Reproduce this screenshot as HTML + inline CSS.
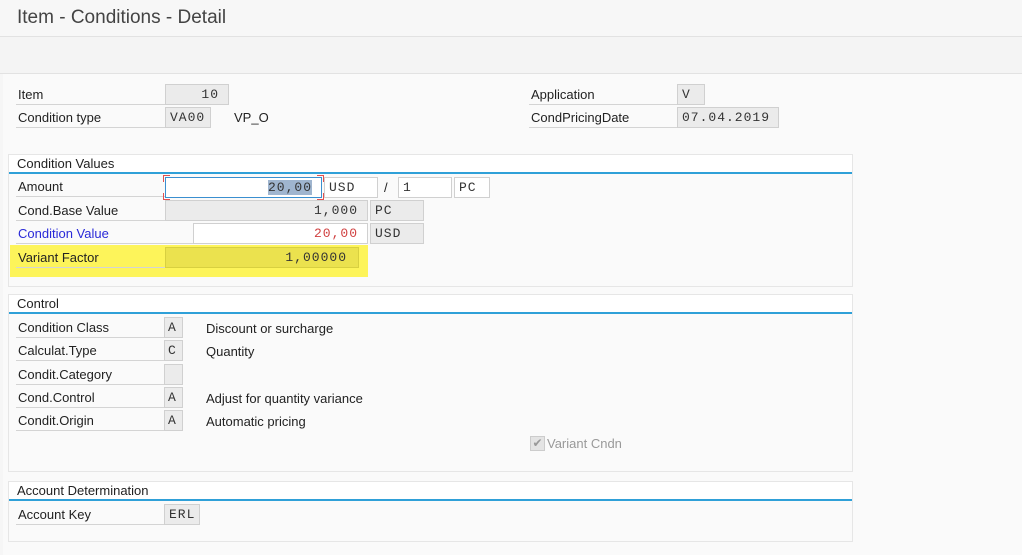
<!DOCTYPE html><html><head><style>
body{margin:0;width:1022px;height:555px;background:#f6f6f6;font-family:"Liberation Sans",sans-serif;font-size:13px;color:#222;position:relative;overflow:hidden}
.a{position:absolute}
.lbl{position:absolute;height:20px;line-height:20px;border-bottom:1px solid #d4d4d4;padding-left:2px;box-sizing:border-box}
.f{position:absolute;height:21px;line-height:20px;box-sizing:border-box;border:1px solid #d0d0d0;background:#ebebeb;font-family:"Liberation Mono",monospace;font-size:13px;letter-spacing:1px;color:#333;padding:0 4px}
.w{background:#fff}
.r{text-align:right;padding-right:9px}
.box{position:absolute;left:8px;right:169px;background:#fafafa;border:1px solid #e6e6e6}
.hd{position:absolute;left:0;right:0;top:0;height:17px;border-bottom:2px solid #2fa0d8;background:#fff;padding-left:8px;line-height:17px}
</style></head><body>
<div class="a" style="left:0;top:0;width:1022px;height:36px;background:#f7f7f7;border-bottom:1px solid #e2e2e2"></div>
<div class="a" style="left:17px;top:7px;font-size:19px;color:#444">Item - Conditions - Detail</div>
<div class="a" style="left:0;top:37px;width:1022px;height:36px;background:#f4f4f4;border-bottom:1px solid #e2e2e2"></div>
<div class="a" style="left:3px;top:74px;width:1019px;height:481px;background:#fafafa"></div>

<div class="lbl" style="left:16px;top:85px;width:150px">Item</div>
<div class="f r" style="left:165px;top:84px;width:64px">10</div>
<div class="lbl" style="left:16px;top:108px;width:150px">Condition type</div>
<div class="f" style="left:165px;top:107px;width:46px">VA00</div>
<div class="a" style="left:234px;top:110px">VP_O</div>
<div class="lbl" style="left:529px;top:85px;width:150px">Application</div>
<div class="f" style="left:677px;top:84px;width:28px">V</div>
<div class="lbl" style="left:529px;top:108px;width:150px">CondPricingDate</div>
<div class="f" style="left:677px;top:107px;width:102px">07.04.2019</div>

<div class="box" style="top:154px;height:131px"><div class="hd">Condition Values</div></div>
<div class="lbl" style="left:16px;top:177px;width:150px">Amount</div>
<div class="f w r" style="left:165px;top:177px;width:157px;border:1px solid #3a8fd0"><span style="background:#9fb5cf">20,00</span></div>
<div class="a" style="left:163px;top:175px;width:6px;height:6px;border-left:1px solid #e05050;border-top:1px solid #e05050"></div>
<div class="a" style="left:163px;top:193px;width:6px;height:6px;border-left:1px solid #e05050;border-bottom:1px solid #e05050"></div>
<div class="a" style="left:317px;top:175px;width:6px;height:6px;border-right:1px solid #e05050;border-top:1px solid #e05050"></div>
<div class="a" style="left:317px;top:193px;width:6px;height:6px;border-right:1px solid #e05050;border-bottom:1px solid #e05050"></div>
<div class="f w" style="left:324px;top:177px;width:54px">USD</div>
<div class="a" style="left:384px;top:180px">/</div>
<div class="f w" style="left:398px;top:177px;width:54px">1</div>
<div class="f w" style="left:454px;top:177px;width:36px">PC</div>
<div class="lbl" style="left:16px;top:201px;width:150px">Cond.Base Value</div>
<div class="f r" style="left:165px;top:200px;width:203px">1,000</div>
<div class="f" style="left:370px;top:200px;width:54px">PC</div>
<div class="lbl" style="left:16px;top:224px;width:180px;color:#2a2ad8">Condition Value</div>
<div class="f w r" style="left:193px;top:223px;width:175px;color:#d04040">20,00</div>
<div class="f" style="left:370px;top:223px;width:54px">USD</div>
<div class="a" style="left:10px;top:245px;width:358px;height:32px;background:#fdf45a"></div>
<div class="lbl" style="left:16px;top:248px;width:150px">Variant Factor</div>
<div class="f r" style="left:165px;top:247px;width:194px;background:#ebe24e;border-color:#d8d040;padding-right:11px">1,00000</div>

<div class="box" style="top:294px;height:176px"><div class="hd">Control</div></div>
<div class="lbl" style="left:16px;top:318px;width:150px">Condition Class</div><div class="f" style="left:164px;top:317px;width:19px;padding:0 3px">A</div><div class="a" style="left:206px;top:321px">Discount or surcharge</div>
<div class="lbl" style="left:16px;top:341px;width:150px">Calculat.Type</div><div class="f" style="left:164px;top:340px;width:19px;padding:0 3px">C</div><div class="a" style="left:206px;top:344px">Quantity</div>
<div class="lbl" style="left:16px;top:365px;width:150px">Condit.Category</div><div class="f" style="left:164px;top:364px;width:19px"></div>
<div class="lbl" style="left:16px;top:388px;width:150px">Cond.Control</div><div class="f" style="left:164px;top:387px;width:19px;padding:0 3px">A</div><div class="a" style="left:206px;top:391px">Adjust for quantity variance</div>
<div class="lbl" style="left:16px;top:411px;width:150px">Condit.Origin</div><div class="f" style="left:164px;top:410px;width:19px;padding:0 3px">A</div><div class="a" style="left:206px;top:414px">Automatic pricing</div>
<div class="a" style="left:530px;top:436px;width:13px;height:13px;background:#e4e4e4;border:1px solid #ccc;color:#999;font-size:12px;line-height:13px;text-align:center">✔</div>
<div class="a" style="left:547px;top:436px;color:#999">Variant Cndn</div>

<div class="box" style="top:481px;height:59px"><div class="hd">Account Determination</div></div>
<div class="lbl" style="left:16px;top:505px;width:150px">Account Key</div>
<div class="f" style="left:164px;top:504px;width:36px">ERL</div>
</body></html>
